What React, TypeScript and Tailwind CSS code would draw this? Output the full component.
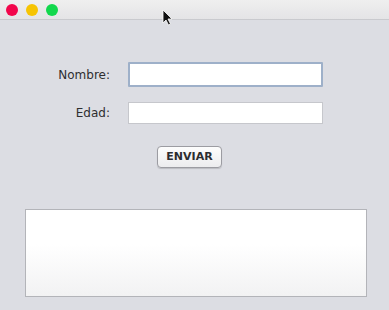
import React from "react"

export default function App() {
  return (
    <div className="relative w-[389px] h-[310px] overflow-hidden bg-[#dcdde3] font-['Lucida_Grande','DejaVu_Sans',sans-serif]">
      {/* title bar */}
      <div className="h-[20px] flex items-center gap-[8px] pl-[6px] bg-gradient-to-b from-[#efefef] to-[#e4e4e6] border-b border-[#c9cace]">
        <span className="w-[12px] h-[12px] rounded-full bg-[#f2064b]" />
        <span className="w-[12px] h-[12px] rounded-full bg-[#f6c402]" />
        <span className="w-[12px] h-[12px] rounded-full bg-[#12d84d]" />
      </div>

      {/* mouse pointer */}
      <svg className="absolute left-[162px] top-[9px]" width="11" height="17" viewBox="0 0 11 17">
        <path d="M1 1 L1 14 L4 11 L6.5 16 L8.5 15 L6 10 L10 10 Z" fill="#111" stroke="#fff" strokeWidth="0.8" />
      </svg>

      <div className="flex flex-col pt-[42px] px-[25px]">
        <div className="grid grid-cols-[85px_195px] gap-x-[18px] gap-y-[15px] items-center">
          <label className="text-right text-[12px] text-[#2e2e30]">Nombre:</label>
          <input className="h-[25px] bg-white border-2 border-[#9eb0c9] rounded-[1px] outline-none" />
          <label className="text-right text-[12px] text-[#2e2e30]">Edad:</label>
          <input className="h-[22px] bg-white border border-[#c6c7cc] outline-none" />
        </div>

        <div className="flex pl-[132px] mt-[22px]">
          <button className="w-[65px] h-[22px] rounded-[4px] border border-[#9c9ca2] bg-gradient-to-b from-[#fdfdfd] to-[#ececee] text-[11px] font-semibold text-[#2c2c30] shadow-[0_1px_1px_rgba(0,0,0,0.15)]">
            ENVIAR
          </button>
        </div>

        <div className="mt-[41px] w-[342px] h-[88px] border border-[#b3b4b9] bg-gradient-to-b from-white from-40% to-[#f2f2f3]" />
      </div>
    </div>
  )
}
